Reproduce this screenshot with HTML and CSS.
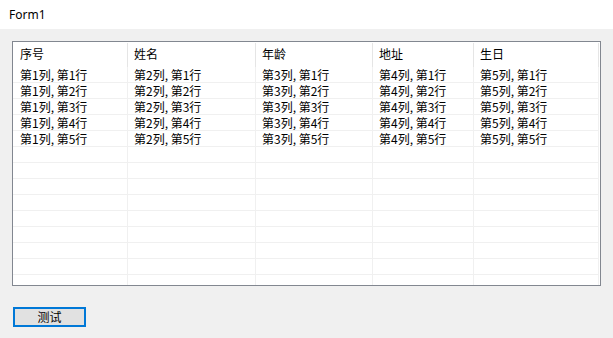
FILE: index.html
```html
<!DOCTYPE html>
<html lang="zh-CN">
<head>
    <meta charset="UTF-8">
    <title>Form1</title>
    <link rel="stylesheet" href="styles.css">
</head>
<body>
    <div class="titlebar">Form1</div>
    <div class="client">
        <div class="listview">
            <div class="row header">
                <div class="cell">序号</div>
                <div class="cell">姓名</div>
                <div class="cell">年龄</div>
                <div class="cell">地址</div>
                <div class="cell">生日</div>
            </div>
            <div id="rows"></div>
        </div>
        <button class="btn">测试</button>
    </div>
    <script>
        // 5 行数据 + 空行填满列表
        var rows = document.getElementById('rows');
        for (var r = 1; r <= 14; r++) {
            var row = document.createElement('div');
            row.className = 'row';
            for (var c = 1; c <= 5; c++) {
                var cell = document.createElement('div');
                cell.className = 'cell';
                if (r <= 5) cell.textContent = '第' + c + '列, 第' + r + '行';
                row.appendChild(cell);
            }
            rows.appendChild(row);
        }
    </script>
</body>
</html>
```

FILE: styles.css
```css
body {
    margin: 0;
    padding: 0;
    height: 338px;
    background-color: #f0f0f0;
    font-family: "Noto Sans CJK SC", "Noto Sans", sans-serif;
    font-size: 12px;
    color: #000;
    overflow: hidden;
}
.titlebar {
    height: 29px;
    line-height: 29px;
    padding-left: 9px;
    background-color: #fff;
    font-family: "Noto Sans", "Liberation Sans", sans-serif;
    font-size: 12px;
}
.client {
    padding: 12px 0 0 12px;
}
.listview {
    width: 587px;
    height: 243px;
    border: 1px solid #828790;
    background-color: #fff;
    overflow: hidden;
}
.row {
    display: grid;
    grid-template-columns: 115px 128px 117px 101px 125px;
    height: 16px;
}
.cell {
    box-sizing: border-box;
    border-right: 1px solid #f0f0f0;
    border-bottom: 1px solid #f0f0f0;
    padding-left: 6px;
    line-height: 15px;
    white-space: nowrap;
    overflow: hidden;
}
.cell:first-child {
    padding-left: 7px;
}
.header {
    height: 25px;
}
.header .cell {
    border-bottom: none;
    border-right: 1px solid #e5e5e5;
    margin-top: 1px;
    line-height: 22px;
}
.btn {
    display: block;
    margin: 21px 0 0 1px;
    width: 73px;
    height: 20px;
    padding: 0;
    border: 2px solid #0078d7;
    background-color: #e1e1e1;
    font-family: "Noto Sans CJK SC", sans-serif;
    font-size: 12px;
    line-height: 16px;
    color: #000;
}
```
